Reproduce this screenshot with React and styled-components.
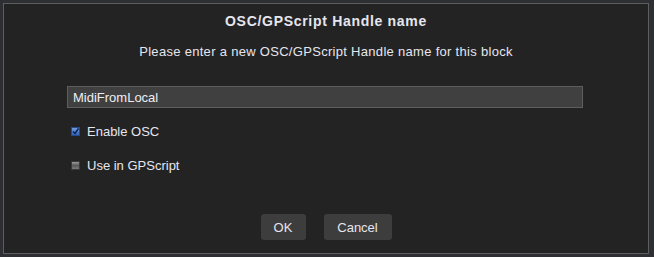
import React, { useState } from "react";
import styled, { createGlobalStyle } from "styled-components";

const GlobalStyle = createGlobalStyle`
  html, body {
    margin: 0;
    padding: 0;
    background: #2d2f33;
  }
  body {
    font-family: "Liberation Sans", Arial, sans-serif;
  }
`;

const Frame = styled.div`
  width: 654px;
  height: 257px;
  box-sizing: border-box;
  padding: 3px 5px 3px 3px;
  background: #2d2f33;
`;

const Dialog = styled.div`
  box-sizing: border-box;
  height: 251px;
  border: 1px solid #5e5e60;
  background: #232323;
  display: flex;
  flex-direction: column;
  color: #e6e6ef;
`;

const Title = styled.div`
  margin-top: 8px;
  text-align: center;
  font-size: 14px;
  font-weight: 700;
  line-height: 18px;
  letter-spacing: 0.7px;
`;

const Subtitle = styled.div`
  margin-top: 13px;
  text-align: center;
  font-size: 13px;
  line-height: 17px;
  letter-spacing: 0.3px;
`;

const Body = styled.div`
  padding: 0 65px 0 63px;
  margin-top: 26px;
  display: flex;
  flex-direction: column;
`;

const NameInput = styled.input`
  box-sizing: border-box;
  width: 516px;
  height: 22px;
  padding: 0 5px;
  margin: 0;
  background: #404040;
  border: 1px solid #5e5e5e;
  color: #eeeef4;
  font-family: inherit;
  font-size: 13px;
  outline: none;
`;

const CheckRow = styled.label`
  display: flex;
  align-items: center;
  gap: 7px;
  height: 18px;
  margin-top: ${(p) => p.$top}px;
  padding-left: 4px;
  font-size: 13px;
  cursor: default;
`;

const Box = styled.span`
  width: 9px;
  height: 9px;
  box-sizing: border-box;
  display: inline-flex;
  align-items: center;
  justify-content: center;
  border: 1px solid ${(p) => (p.$on ? "#2a4a86" : "#3a3a3a")};
  background: ${(p) =>
    p.$on
      ? "linear-gradient(#6f9be0, #2f62c0)"
      : "linear-gradient(#9a9a9a, #5a5a5a 50%, #7a7a7a)"};
`;

const Footer = styled.div`
  margin-top: auto;
  margin-bottom: 13px;
  display: flex;
  justify-content: center;
  gap: 18px;
`;

const Button = styled.button`
  height: 26px;
  width: ${(p) => p.$w}px;
  border: none;
  border-radius: 3px;
  background: #3d3d3d;
  color: #e6e6ef;
  font-family: inherit;
  font-size: 13px;
  padding: 0;
`;

const Check = ({ on, label, top, onToggle }) => (
  <CheckRow $top={top} onClick={onToggle}>
    <Box $on={on}>
      {on && (
        <svg width="7" height="7" viewBox="0 0 7 7">
          <path d="M1 3.5 L3 5.5 L6.5 0.5" stroke="#0c1e40" strokeWidth="1.4" fill="none" />
        </svg>
      )}
    </Box>
    {label}
  </CheckRow>
);

export default function App() {
  const [name, setName] = useState("MidiFromLocal");
  const [osc, setOsc] = useState(true);
  const [gps, setGps] = useState(false);

  return (
    <>
      <GlobalStyle />
      <Frame>
        <Dialog>
          <Title>OSC/GPScript Handle name</Title>
          <Subtitle>Please enter a new OSC/GPScript Handle name for this block</Subtitle>
          <Body>
            <NameInput value={name} onChange={(e) => setName(e.target.value)} />
            <Check on={osc} label="Enable OSC" top={14} onToggle={() => setOsc(!osc)} />
            <Check on={gps} label="Use in GPScript" top={16} onToggle={() => setGps(!gps)} />
          </Body>
          <Footer>
            <Button $w={45}>OK</Button>
            <Button $w={68}>Cancel</Button>
          </Footer>
        </Dialog>
      </Frame>
    </>
  );
}
